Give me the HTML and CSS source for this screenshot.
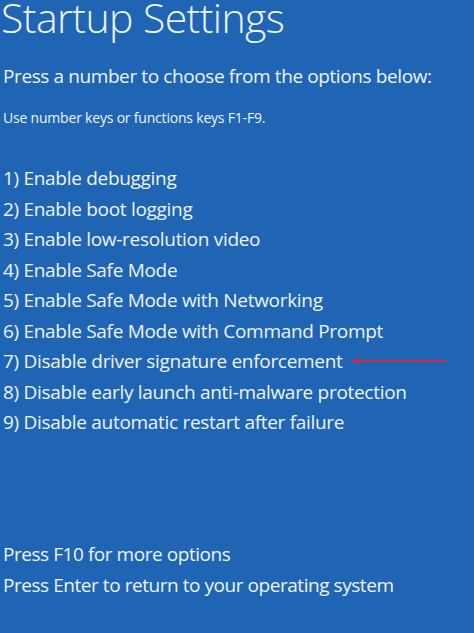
FILE: index.html
```html
<!DOCTYPE html>
<html>
<head>
<meta charset="utf-8">
<link rel="stylesheet" href="styles.css">
</head>
<body>
<main class="screen">
  <h1 class="title">Startup Settings</h1>
  <p class="lead">Press a number to choose from the options below:</p>
  <p class="hint">Use number keys or functions keys F1-F9.</p>
  <ol class="options">
    <li>1) Enable debugging</li>
    <li>2) Enable boot logging</li>
    <li>3) Enable low-resolution video</li>
    <li>4) Enable Safe Mode</li>
    <li>5) Enable Safe Mode with Networking</li>
    <li>6) Enable Safe Mode with Command Prompt</li>
    <li class="marked">7) Disable driver signature enforcement<svg class="arrow" width="98" height="8" viewBox="0 0 98 8"><line x1="6" y1="4" x2="96" y2="4" stroke="#d42a48" stroke-width="1.8"/><path d="M1 4 L9 1 L9 7 Z" fill="#d42a48"/></svg></li>
    <li>8) Disable early launch anti-malware protection</li>
    <li>9) Disable automatic restart after failure</li>
  </ol>
  <div class="footer">
    <p>Press F10 for more options</p>
    <p>Press Enter to return to your operating system</p>
  </div>
</main>
</body>
</html>
```
FILE: styles.css
```css
html, body {
  margin: 0;
  padding: 0;
  height: 100%;
}
body {
  background: #1f65b3;
  color: #eef4fb;
  font-family: "Open Sans", "Noto Sans", sans-serif;
}
.screen {
  display: flex;
  flex-direction: column;
  padding: 0 0 0 3px;
  height: 633px;
  box-sizing: border-box;
}
.title {
  margin: 0 0 0 -2px;
  font-weight: 300;
  font-size: 41px;
  line-height: 34px;
  letter-spacing: -0.6px;
}
.lead {
  margin: 29px 0 0 0;
  font-size: 19px;
  line-height: 26px;
  letter-spacing: -0.4px;
}
.hint {
  margin: 19px 0 0 0;
  font-size: 14px;
  line-height: 20px;
  letter-spacing: -0.2px;
}
.options {
  list-style: none;
  margin: 35px 0 0 0;
  padding: 0;
  font-size: 19px;
  line-height: 30.5px;
  letter-spacing: -0.3px;
}
.options li {
  display: flex;
  align-items: center;
}
.arrow {
  margin-left: 7px;
  margin-top: 0;
}
.footer {
  margin-top: auto;
  margin-bottom: 32px;
  font-size: 19px;
  line-height: 31px;
  letter-spacing: -0.45px;
}
.footer p {
  margin: 0;
}
```
